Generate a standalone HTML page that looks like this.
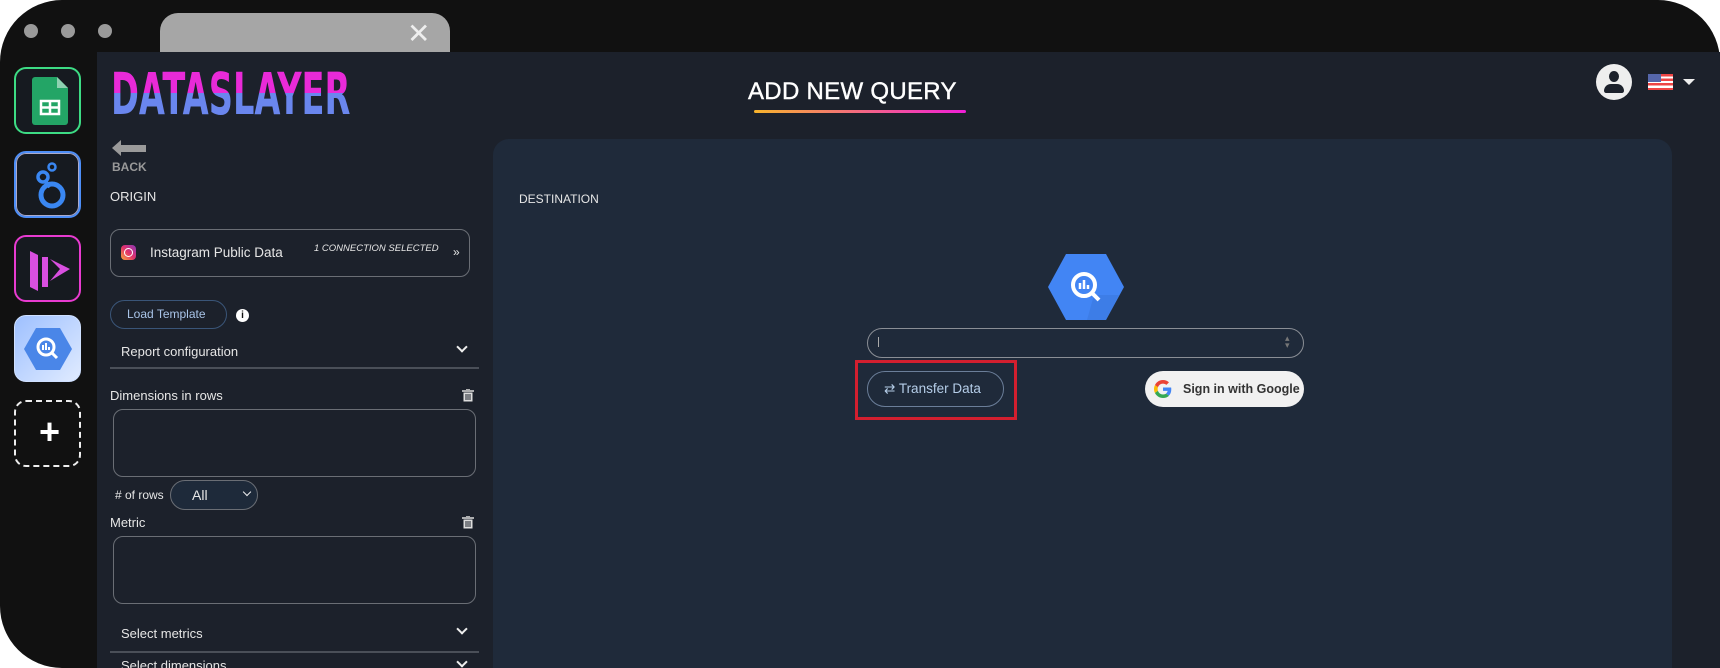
<!DOCTYPE html>
<html><head><meta charset="utf-8"><style>
*{box-sizing:border-box;margin:0;padding:0}
html,body{width:1720px;height:668px;overflow:hidden}
body{background:#fff;font-family:"Liberation Sans",sans-serif;position:relative}
.frame{position:absolute;left:0;top:0;width:1720px;height:668px;background:#111;border-radius:62px 62px 0 62px}
.abs{position:absolute}
.dot{position:absolute;top:24px;width:14px;height:14px;border-radius:50%;background:#9a9a9a}
.panel{position:absolute;left:97px;top:52px;width:1623px;height:616px;background:#1c212b}
.sb{position:absolute;left:14px;width:67px;height:67px;border-radius:12px;background:#161a20}
.t{position:absolute;color:#e6e6e6;font-size:13px;white-space:nowrap}
.line{position:absolute;left:110px;width:369px;height:2px;background:#4a4f58}
.ta{position:absolute;left:113px;width:363px;height:68px;border:1.5px solid #6a6e75;border-radius:10px}
.chev{position:absolute;width:8px;height:8px;border-right:2px solid #eee;border-bottom:2px solid #eee;transform:rotate(45deg)}
</style></head><body>
<div class="frame"></div>
<div class="dot" style="left:24px"></div><div class="dot" style="left:61px"></div><div class="dot" style="left:98px"></div>
<div class="abs" style="left:160px;top:13px;width:290px;height:42px;background:#a6a6a6;border-radius:18px 18px 0 0"></div>
<div class="abs" style="left:407px;top:20px;color:#eee;font-size:28px;line-height:28px">✕</div>
<div class="panel"></div>

<!-- sidebar -->
<div class="sb" style="top:67px;border:2.5px solid #3ddc84"><svg class="abs" style="left:16px;top:8px" width="36" height="48" viewBox="0 0 36 48"><path d="M3 0h22l11 11v34a3 3 0 0 1-3 3H3a3 3 0 0 1-3-3V3a3 3 0 0 1 3-3z" fill="#23a566"/><path d="M25 0v11h11z" fill="#8ed1b1"/><rect x="9" y="24" width="18" height="13" fill="none" stroke="#fff" stroke-width="2.5"/><path d="M9 30.5h18M18 24v13" stroke="#fff" stroke-width="2.5"/></svg></div>
<div class="sb" style="top:151px;border:2.5px solid #4d8ef7;box-shadow:inset 0 0 0 1px #aac"><svg class="abs" style="left:16px;top:8px" width="36" height="50" viewBox="0 0 36 50"><circle cx="20" cy="34" r="11" fill="none" stroke="#3a87f2" stroke-width="5"/><circle cx="11" cy="16" r="5" fill="none" stroke="#3a87f2" stroke-width="3.5"/><circle cx="20" cy="6" r="3.5" fill="none" stroke="#3a87f2" stroke-width="2.5"/><path d="M13 20l5 6" stroke="#3a87f2" stroke-width="4"/></svg></div>
<div class="sb" style="top:235px;border:2.5px solid #e83bd0"><svg class="abs" style="left:12px;top:10px" width="44" height="46" viewBox="0 0 44 46"><path d="M2 4l8 4v36l-8-4z" fill="#d94fe0"/><path d="M14 10h6v30h-6z" fill="#d94fe0"/><path d="M22 12l20 10-20 12 10-12z" fill="#d94fe0"/></svg></div>
<div class="sb" style="top:315px;background:linear-gradient(135deg,#9ec0ff,#e0ebff);border:1px solid #cfe0ff"><svg class="abs" style="left:8px;top:10px" width="50" height="46" viewBox="0 0 50 46"><path d="M13 2h24l12 21-12 21H13L1 23z" fill="#4a86e8"/><circle cx="23" cy="21" r="8" fill="none" stroke="#fff" stroke-width="3"/><path d="M29 27l5 5" stroke="#fff" stroke-width="3"/><path d="M20 19v5M23 17v7M26 21v3" stroke="#fff" stroke-width="2"/></svg></div>
<div class="sb" style="top:400px;background:none;border:2.5px dashed #eee"><div class="abs" style="left:23px;top:8px;color:#fff;font-size:36px;font-weight:bold;line-height:44px">+</div></div>

<!-- logo -->
<div class="abs" style="left:111px;top:63px;font-family:'DejaVu Sans',sans-serif;font-weight:bold;font-size:58px;letter-spacing:0px;line-height:62px;background:linear-gradient(180deg,#e92ad8 0 48%,#6a86ee 48%);-webkit-background-clip:text;background-clip:text;color:transparent;transform:scaleX(0.58);transform-origin:left">DATASLAYER</div>

<svg class="abs" style="left:112px;top:140px" width="34" height="16" viewBox="0 0 34 16"><path d="M0 8l9-8v5h25v7H9v4z" fill="#9a9a9a"/></svg>
<div class="t" style="left:112px;top:160px;color:#999;font-weight:bold;font-size:12px">BACK</div>
<div class="t" style="left:110px;top:189px">ORIGIN</div>

<div class="abs" style="left:110px;top:229px;width:360px;height:48px;border:1.5px solid #6a6e75;border-radius:10px"></div>
<div class="abs" style="left:121px;top:245px;width:15px;height:15px;border-radius:4px;background:linear-gradient(45deg,#f9a93a,#e1306c,#8a3ab9)"><div class="abs" style="left:3px;top:3px;width:9px;height:9px;border-radius:50%;border:1.5px solid #fff"></div></div>
<div class="t" style="left:150px;top:245px;font-size:13.5px">Instagram Public Data</div>
<div class="t" style="left:314px;top:243px;font-size:9.5px;font-style:italic">1 CONNECTION SELECTED</div>
<div class="t" style="left:453px;top:245px;font-size:12px">»</div>

<div class="abs" style="left:110px;top:300px;width:117px;height:29px;border:1.5px solid #3a5578;border-radius:15px"></div>
<div class="t" style="left:127px;top:307px;font-size:12px;color:#a9c4e8">Load Template</div>
<div class="abs" style="left:236px;top:309px;width:13px;height:13px;border-radius:50%;background:#fff;color:#111;font-size:10px;font-weight:bold;text-align:center;line-height:13px">i</div>

<div class="t" style="left:121px;top:344px">Report configuration</div>
<div class="chev" style="left:458px;top:343px"></div>
<div class="line" style="top:367px"></div>

<div class="t" style="left:110px;top:388px">Dimensions in rows</div>
<svg class="abs" style="left:462px;top:389px" width="12" height="13" viewBox="0 0 12 13"><path d="M0 2h12M4 0h4" stroke="#ddd" stroke-width="1.6"/><path d="M1.5 3.5h9v9h-9z" fill="#ddd"/><path d="M4 5v6M6 5v6M8 5v6" stroke="#1c212b" stroke-width="1"/></svg>
<div class="ta" style="top:409px"></div>
<div class="t" style="left:115px;top:488px;font-size:12px">#&nbsp;of rows</div>
<div class="abs" style="left:170px;top:480px;width:88px;height:30px;border:1.5px solid #6a6e75;border-radius:15px;background:#1e2a3a"></div>
<div class="t" style="left:192px;top:487px;font-size:14px">All</div>
<div class="chev" style="left:244px;top:489px;width:6px;height:6px;border-width:1.5px"></div>
<div class="t" style="left:110px;top:515px">Metric</div>
<svg class="abs" style="left:462px;top:516px" width="12" height="13" viewBox="0 0 12 13"><path d="M0 2h12M4 0h4" stroke="#ddd" stroke-width="1.6"/><path d="M1.5 3.5h9v9h-9z" fill="#ddd"/><path d="M4 5v6M6 5v6M8 5v6" stroke="#1c212b" stroke-width="1"/></svg>
<div class="ta" style="top:536px"></div>
<div class="t" style="left:121px;top:626px">Select metrics</div>
<div class="chev" style="left:458px;top:625px"></div>
<div class="line" style="top:651px"></div>
<div class="t" style="left:121px;top:658px">Select dimensions</div>
<div class="chev" style="left:458px;top:658px"></div>

<!-- title -->
<div class="t" style="left:748px;top:78px;font-size:24px;color:#fff;letter-spacing:0.3px;-webkit-text-stroke:0.4px #fff">ADD NEW QUERY</div>
<div class="abs" style="left:754px;top:110px;width:212px;height:3px;border-radius:2px;background:linear-gradient(90deg,#f7b42c,#f01ed8)"></div>

<!-- avatar/flag -->
<div class="abs" style="left:1596px;top:64px;width:36px;height:36px;border-radius:50%;background:#eee;overflow:hidden"><div class="abs" style="left:13px;top:7px;width:10px;height:11px;border-radius:50%;background:#1c212b"></div><div class="abs" style="left:8px;top:20px;width:20px;height:9px;border-radius:10px 10px 3px 3px;background:#1c212b"></div></div>
<div class="abs" style="left:1648px;top:74px;width:25px;height:16px;background:repeating-linear-gradient(180deg,#e44 0 2.3px,#fff 2.3px 4.6px)"><div class="abs" style="left:0;top:0;width:13px;height:8px;background:#5566aa"></div></div>
<div class="abs" style="left:1683px;top:79px;border-left:6px solid transparent;border-right:6px solid transparent;border-top:6px solid #eee"></div>

<!-- right panel -->
<div class="abs" style="left:493px;top:139px;width:1179px;height:529px;background:#1f2a3a;border-radius:16px 16px 0 0"></div>
<div class="t" style="left:519px;top:192px;font-size:12px">DESTINATION</div>
<svg class="abs" style="left:1047px;top:253px" width="78" height="68" viewBox="0 0 78 68"><path d="M19 1h40l18 33-18 33H19L1 34z" fill="#4285f4"/><path d="M47 42l25 0-13 25H40z" fill="#3a78dd" opacity=".6"/><circle cx="37" cy="32" r="11" fill="none" stroke="#fff" stroke-width="4"/><path d="M45 40l7 7" stroke="#fff" stroke-width="4"/><path d="M33 30v6M37 27v9M41 32v4" stroke="#fff" stroke-width="2.5"/></svg>
<div class="abs" style="left:867px;top:328px;width:437px;height:30px;border:1.5px solid #8a8e95;border-radius:15px"></div>
<div class="abs" style="left:878px;top:337px;width:1px;height:10px;background:#aaa"></div>
<div class="t" style="left:1285px;top:335px;font-size:9px;color:#777;line-height:7px">▴<br>▾</div>
<div class="abs" style="left:855px;top:360px;width:162px;height:60px;border:3px solid #d31f2f"></div>
<div class="abs" style="left:867px;top:371px;width:137px;height:36px;border:1.5px solid #6b7e99;border-radius:18px"></div>
<div class="t" style="left:884px;top:381px;font-size:13.5px;color:#b5cde8">⇄ Transfer Data</div>
<div class="abs" style="left:1145px;top:371px;width:159px;height:36px;background:#f1f1f1;border-radius:18px"></div>
<svg class="abs" style="left:1154px;top:380px" width="18" height="18" viewBox="0 0 48 48"><path fill="#EA4335" d="M24 9.5c3.5 0 6.6 1.2 9.1 3.6l6.8-6.8C35.8 2.4 30.3 0 24 0 14.6 0 6.6 5.4 2.6 13.3l7.9 6.2C12.4 13.7 17.7 9.5 24 9.5z"/><path fill="#4285F4" d="M46.1 24.5c0-1.6-.1-3.1-.4-4.5H24v9h12.4c-.5 2.9-2.2 5.3-4.6 7l7.7 6c4.4-4.1 6.6-10.2 6.6-17.5z"/><path fill="#FBBC05" d="M10.5 28.6c-.5-1.4-.8-3-.8-4.6s.3-3.2.8-4.6l-7.9-6.2C.9 16.6 0 20.2 0 24s.9 7.4 2.6 10.8z"/><path fill="#34A853" d="M24 48c6.5 0 11.9-2.1 15.9-5.8l-7.7-6c-2.1 1.4-4.9 2.3-8.2 2.3-6.3 0-11.6-4.2-13.5-10l-7.9 6.2C6.6 42.6 14.6 48 24 48z"/></svg>
<div class="t" style="left:1183px;top:382px;font-size:12.5px;color:#333;font-weight:bold">Sign in with Google</div>
</body></html>
